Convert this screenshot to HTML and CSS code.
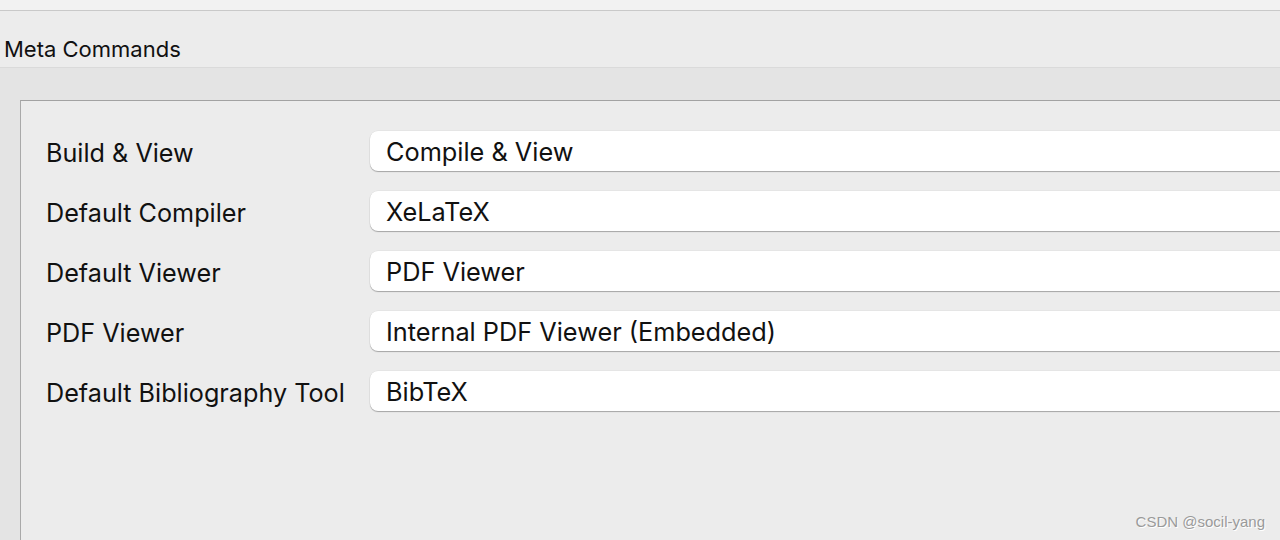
FILE: index.html
```html
<!DOCTYPE html>
<html>
<head>
<meta charset="utf-8">
<link rel="stylesheet" href="styles.css">
</head>
<body>
<div class="topstrip"></div>
<div class="header">Meta Commands</div>
<div class="pane">
  <div class="box">
    <div class="row"><div class="label">Build &amp; View</div><div class="field">Compile &amp; View</div></div>
    <div class="row"><div class="label">Default Compiler</div><div class="field">XeLaTeX</div></div>
    <div class="row"><div class="label">Default Viewer</div><div class="field">PDF Viewer</div></div>
    <div class="row"><div class="label">PDF Viewer</div><div class="field">Internal PDF Viewer (Embedded)</div></div>
    <div class="row"><div class="label">Default Bibliography Tool</div><div class="field">BibTeX</div></div>
  </div>
</div>
<div class="watermark">CSDN @socil-yang</div>
</body>
</html>
```
FILE: styles.css
```css
html, body {
  margin: 0;
  padding: 0;
  width: 1280px;
  height: 540px;
  overflow: hidden;
}
body {
  background: #e4e4e4;
  font-family: Inter, "Noto Sans", sans-serif;
  color: #111;
  display: flex;
  flex-direction: column;
}
.topstrip {
  height: 10px;
  flex: none;
  background: #f2f2f2;
  border-bottom: 1px solid #c9c9c9;
}
.header {
  height: 57px;
  flex: none;
  box-sizing: border-box;
  background: #ececec;
  border-bottom: 1px solid #dadada;
  padding: 24px 0 0 4px;
  font-size: 22px;
  line-height: 28px;
}
.pane {
  flex: 1;
  min-height: 0;
  display: flex;
  padding: 32px 0 0 20px;
}
.box {
  flex: 1;
  background: #ececec;
  border-top: 1px solid #a2a2a2;
  border-left: 1px solid #a9a9a9;
  padding: 30px 0 0 25px;
  display: flex;
  flex-direction: column;
  gap: 20px;
}
.row {
  display: flex;
  align-items: center;
  height: 40px;
}
.label {
  width: 324px;
  flex: none;
  font-size: 25.2px;
  line-height: 30px;
  padding-top: 4px;
}
.field {
  flex: 1;
  height: 40px;
  box-sizing: border-box;
  background: #fff;
  border-radius: 8px 0 0 8px;
  box-shadow: 0 1px 1px rgba(0,0,0,0.28), 0 0 0 0.5px rgba(0,0,0,0.06);
  padding: 6px 0 0 16px;
  font-size: 25.3px;
  line-height: 30px;
}
.watermark {
  position: absolute;
  right: 15px;
  top: 513px;
  font-family: "Liberation Sans", Arial, sans-serif;
  font-size: 15px;
  color: #9a9a9a;
  text-shadow: 1px 1px 0 #fff;
}
```
